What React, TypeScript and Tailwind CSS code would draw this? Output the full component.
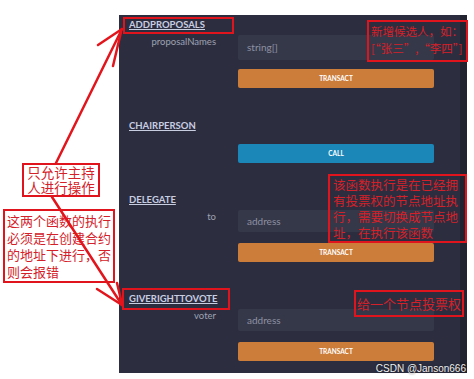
import React from "react";

const ui = { fontFamily: "Lato, 'Open Sans', sans-serif" };
const cjk = { fontFamily: "'Noto Sans CJK SC', sans-serif" };

function Title({ children }: { children: React.ReactNode }) {
  return (
    <div className="h-[14px] leading-[14px] text-[9.5px] font-bold underline text-[#c9cde0]">
      {children}
    </div>
  );
}

function Row({ label, ph, h }: { label: string; ph: string; h: string }) {
  return (
    <div className="flex mt-[3px]">
      <div className="w-[87px] text-right text-[9.5px] leading-[12px] text-[#9ea2b2] pt-[1px]">{label}</div>
      <div
        className={`ml-[22px] w-[196px] ${h} bg-[#353849] rounded-[2px] pl-[9px] text-[10px] text-[#8d91a3] flex items-center`}
      >
        {ph}
      </div>
    </div>
  );
}

function Btn({ label, color, mt }: { label: string; color: string; mt: string }) {
  return (
    <div
      className={`${mt} ml-[109px] w-[196px] h-[19px] ${color} rounded-[2px] text-white text-[6.5px] font-bold leading-[19px] text-center`}
    >
      {label}
    </div>
  );
}

export default function App() {
  return (
    <div className="relative w-[474px] h-[379px] bg-white overflow-hidden" style={ui}>
      <div className="pl-[119px] pt-[15px]">
        <div className="flex w-[348px] h-[358px] bg-[#2c2e40]">
          <div className="flex-1 pl-[10px] pt-[3px] flex flex-col">
            <Title>ADDPROPOSALS</Title>
            <Row label="proposalNames" ph="string[]" h="h-[25px]" />
            <Btn label="TRANSACT" color="bg-[#cc7d3a]" mt="mt-[9px]" />

            <div className="mt-[31px]">
              <Title>CHAIRPERSON</Title>
            </div>
            <Btn label="CALL" color="bg-[#1b86b8]" mt="mt-[11px]" />

            <div className="mt-[30px]">
              <Title>DELEGATE</Title>
            </div>
            <Row label="to" ph="address" h="h-[22px]" />
            <Btn label="TRANSACT" color="bg-[#cc7d3a]" mt="mt-[11px]" />

            <div className="mt-[30px]">
              <Title>GIVERIGHTTOVOTE</Title>
            </div>
            <Row label="voter" ph="address" h="h-[22px]" />
            <Btn label="TRANSACT" color="bg-[#cc7d3a]" mt="mt-[11px]" />
          </div>
          <div className="w-[7px] bg-[#222331]" />
        </div>
      </div>

      {/* highlight boxes on titles */}
      <div className="absolute left-[123px] top-[17px] w-[111px] h-[17px] border-2 border-[#e0141c]" />
      <div className="absolute left-[122px] top-[288px] w-[108px] h-[22px] border-2 border-[#e0141c]" />

      {/* right annotations */}
      <div
        className="absolute left-[367px] top-[20px] w-[101px] h-[42px] border-2 border-[#e0141c] text-[#d42129] text-[11.5px] leading-[17px] pl-[2px] pt-[1px] whitespace-nowrap overflow-hidden"
        style={cjk}
      >
        <div>新增候选人，如：</div>
        <div>[“张三”,“李四”]</div>
      </div>
      <div
        className="absolute left-[328px] top-[174px] w-[139px] h-[69px] border-2 border-[#e0141c] text-[#d42129] text-[12.5px] leading-[16px] pl-[3px] pt-[1px] whitespace-nowrap overflow-hidden"
        style={cjk}
      >
        <div>该函数执行是在已经拥</div>
        <div>有投票权的节点地址执</div>
        <div>行，需要切换成节点地</div>
        <div>址，在执行该函数</div>
      </div>
      <div
        className="absolute left-[354px] top-[290px] w-[110px] h-[27px] border-2 border-[#e0141c] text-[#d42129] text-[13px] leading-[23px] pl-[1px] whitespace-nowrap overflow-hidden"
        style={cjk}
      >
        给一个节点投票权
      </div>

      {/* left annotations */}
      <div
        className="absolute left-[22px] top-[163px] w-[78px] h-[34px] border-2 border-[#e0141c] bg-white text-[#d42129] text-[13.5px] leading-[15px] text-center whitespace-nowrap"
        style={cjk}
      >
        <div>只允许主持</div>
        <div>人进行操作</div>
      </div>
      <div
        className="absolute left-[3px] top-[209px] w-[112px] h-[74px] border-2 border-[#e0141c] bg-white text-[#d42129] text-[13px] leading-[17px] pl-[2px] pt-[1px] whitespace-nowrap overflow-hidden"
        style={cjk}
      >
        <div>这两个函数的执行</div>
        <div>必须是在创建合约</div>
        <div>的地址下进行，否</div>
        <div>则会报错</div>
      </div>

      {/* arrows */}
      <svg className="absolute left-0 top-0 pointer-events-none" width="474" height="379" viewBox="0 0 474 379">
        <g stroke="#e3151c" strokeWidth="2.5" strokeLinecap="round" fill="none">
          <line x1="56" y1="163" x2="122" y2="29" />
          <line x1="122" y1="29" x2="98" y2="45" />
          <line x1="121" y1="32" x2="113" y2="66" />
          <line x1="52" y1="197" x2="122" y2="305" />
          <line x1="122" y1="305" x2="97" y2="289" />
          <line x1="122" y1="304" x2="117" y2="283" />
        </g>
      </svg>

      {/* watermark */}
      <div
        className="absolute right-[8px] top-[363px] text-[10px] leading-[12px] text-[#f0f0f0] whitespace-nowrap [text-shadow:0_0_2px_rgba(0,0,0,0.7)]"
        style={{ fontFamily: "'Liberation Sans', sans-serif" }}
      >
        CSDN @Janson666
      </div>
    </div>
  );
}
